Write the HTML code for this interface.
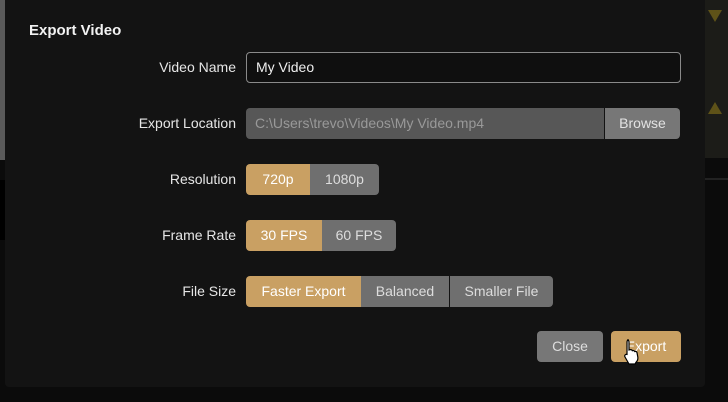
<!DOCTYPE html>
<html><head><style>
*{box-sizing:border-box;margin:0;padding:0}
body{width:728px;height:402px;background:#0b0b0b;position:relative;overflow:hidden;font-family:"Liberation Sans",sans-serif;font-size:14px;color:#e8e8e8}
.a{position:absolute}
.dlg{left:5px;top:0;width:700px;height:387px;background:#131313;border-radius:0 0 4px 4px}
.lbl{position:absolute;right:492px;text-align:right;color:#e6e6e6;font-size:14px;white-space:nowrap}
.b{position:absolute;height:31px;line-height:31px;text-align:center;font-size:14px;color:#ddd;background:#6f6f6f}
.g{background:#c9a063;color:#fff}
</style></head><body>
<div class="a" style="left:0;top:0;width:5px;height:160px;background:#5a5a5a"></div>
<div class="a" style="left:0;top:180px;width:5px;height:60px;background:#000"></div>
<div class="a" style="left:705px;top:0;width:23px;height:158px;background:#1c1c18"></div>
<div class="a" style="left:705px;top:178px;width:23px;height:2px;background:#222"></div>
<div class="a" style="left:708px;top:10px;width:0;height:0;border-left:7px solid transparent;border-right:7px solid transparent;border-top:12px solid #5e5218"></div>
<div class="a" style="left:708px;top:102px;width:0;height:0;border-left:7px solid transparent;border-right:7px solid transparent;border-bottom:12px solid #5e5218"></div>
<div class="a dlg"></div>
<div class="a" style="left:29px;top:22px;font-weight:bold;font-size:15px;color:#f2f2f2">Export Video</div>

<div class="lbl" style="top:59px">Video Name</div>
<div class="a" style="left:246px;top:52px;width:435px;height:31px;border:1px solid #8a8a8a;border-radius:4px;background:#0f0f0f;padding-left:9px;line-height:29px;color:#eee">My Video</div>

<div class="lbl" style="top:115px">Export Location</div>
<div class="a" style="left:246px;top:108px;width:358px;height:31px;background:#575757;border-radius:4px 0 0 4px;padding-left:9px;line-height:31px;color:#999">C:\Users\trevo\Videos\My Video.mp4</div>
<div class="b" style="left:605px;top:108px;width:75px;border-radius:0 4px 4px 0;background:#777;color:#e2e2e2">Browse</div>

<div class="lbl" style="top:171px">Resolution</div>
<div class="b g" style="left:246px;top:164px;width:64px;border-radius:4px 0 0 4px">720p</div>
<div class="b" style="left:310px;top:164px;width:69px;border-radius:0 4px 4px 0">1080p</div>

<div class="lbl" style="top:227px">Frame Rate</div>
<div class="b g" style="left:246px;top:220px;width:76px;border-radius:4px 0 0 4px">30 FPS</div>
<div class="b" style="left:322px;top:220px;width:74px;border-radius:0 4px 4px 0">60 FPS</div>

<div class="lbl" style="top:283px">File Size</div>
<div class="b g" style="left:246px;top:276px;width:115px;border-radius:4px 0 0 4px">Faster Export</div>
<div class="b" style="left:361px;top:276px;width:88px">Balanced</div>
<div class="b" style="left:450px;top:276px;width:103px;border-radius:0 4px 4px 0">Smaller File</div>

<div class="b" style="left:537px;top:331px;width:66px;border-radius:4px;background:#777">Close</div>
<div class="b g" style="left:611px;top:331px;width:70px;border-radius:4px">Export</div>
<svg class="a" style="left:624px;top:338px" width="20" height="28" viewBox="0 0 20 28"><path d="M5 2c1.2 0 2 .8 2 2v8l1-.3c1-.2 2 .3 2.3 1 .8-.4 2-.2 2.4.8 .9-.3 2 .2 2.3 1.1l.8 4.4c.3 2-.4 4-1.8 5.3L13 26H7l-4-7c-.6-1-.2-2.2.8-2.6.8-.3 1.3 0 1.2.6V4c0-1.2.8-2 2-2z" transform="translate(-2 0)" fill="#fff" stroke="#000" stroke-width="1.2"/></svg>
</body></html>
